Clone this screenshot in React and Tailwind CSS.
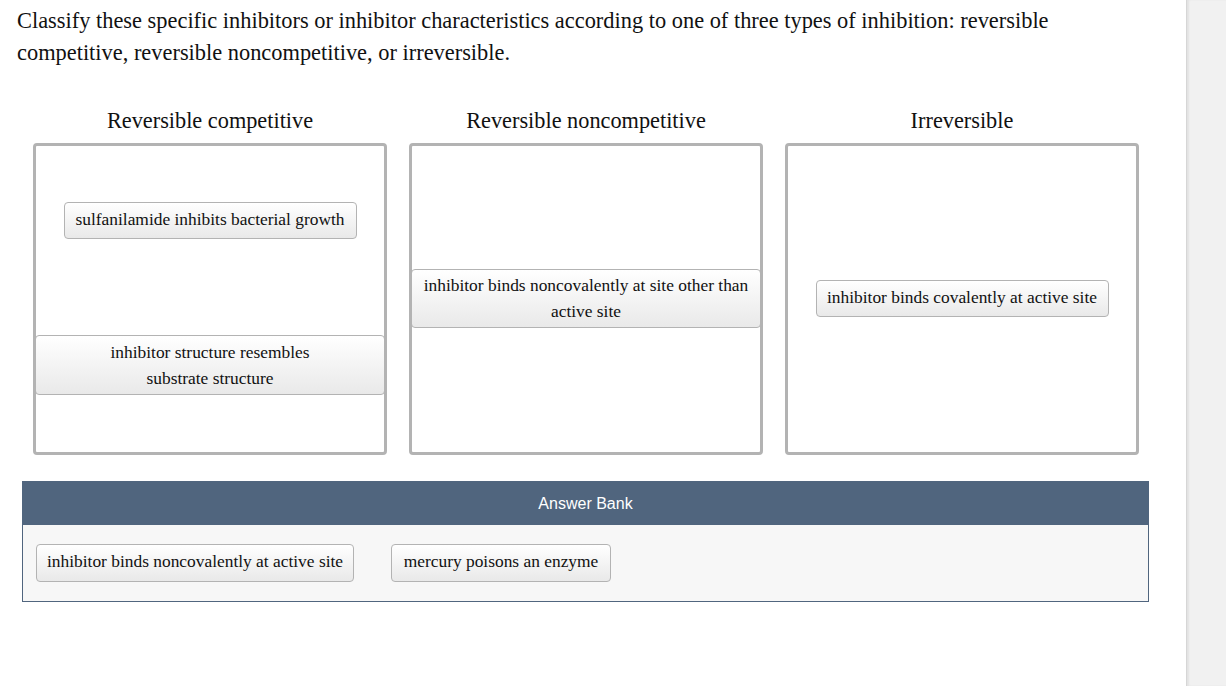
const serif = { fontFamily: '"Liberation Serif", "Times New Roman", serif' };

function Chip({ children, className = "" }) {
  return (
    <div
      className={`rounded-[4px] border border-[#b3b3b3] bg-gradient-to-b from-white to-[#e9e9e9] text-center text-[17.4px] leading-[26px] text-[#111] ${className}`}
      style={serif}
    >
      {children}
    </div>
  );
}

function Column({ title, children }) {
  return (
    <div className="flex w-[354px] flex-col">
      <div className="h-[39px] pt-[4px] text-center text-[22.3px] leading-[26px] text-[#111]" style={serif}>
        {title}
      </div>
      <div className="h-[312px] rounded-[4px] border-[3px] border-[#b3b3b3] bg-white">{children}</div>
    </div>
  );
}

export default function App() {
  return (
    <div className="flex h-[686px] w-[1226px] overflow-hidden bg-white">
      <main className="w-[1186px] shrink-0">
        <p className="px-[17px] pt-[5px] text-[22.4px] leading-[32px] text-[#111]" style={serif}>
          Classify these specific inhibitors or inhibitor characteristics according to one of three types of inhibition: reversible
          <br />
          competitive, reversible noncompetitive, or irreversible.
        </p>

        <div className="mt-[35px] flex gap-[22px] pl-[33px]">
          <Column title="Reversible competitive">
            <Chip className="mx-auto mt-[56px] h-[37px] w-[293px] leading-[33px]">sulfanilamide inhibits bacterial growth</Chip>
            <Chip className="mx-[-1px] mt-[96px] h-[60px] pt-[3px]">
              inhibitor structure resembles
              <br />
              substrate structure
            </Chip>
          </Column>
          <Column title="Reversible noncompetitive">
            <Chip className="mx-[-1px] mt-[123px] h-[59px] pt-[2px]">
              inhibitor binds noncovalently at site other than
              <br />
              active site
            </Chip>
          </Column>
          <Column title="Irreversible">
            <Chip className="mx-auto mt-[134px] h-[37px] w-[293px] leading-[32px]">inhibitor binds covalently at active site</Chip>
          </Column>
        </div>

        <section className="ml-[22px] mt-[26px] w-[1127px] border border-[#50657e]">
          <div
            className="flex h-[43px] items-center justify-center bg-[#50657e] text-[16px] text-white"
            style={{ fontFamily: '"Liberation Sans", Arial, sans-serif' }}
          >
            Answer Bank
          </div>
          <div className="flex h-[76px] items-center gap-[37px] bg-[#f7f7f7] px-[13px]">
            <Chip className="h-[38px] w-[318px] leading-[32px]">inhibitor binds noncovalently at active site</Chip>
            <Chip className="h-[38px] w-[220px] leading-[32px]">mercury poisons an enzyme</Chip>
          </div>
        </section>
      </main>
      <aside className="h-full flex-1 border-l border-[#d6d6d6] bg-[#f1f1f1] shadow-[inset_2px_0_2px_rgba(0,0,0,0.06)]" />
    </div>
  );
}
